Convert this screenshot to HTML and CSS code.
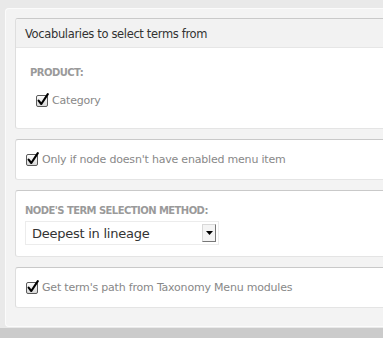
FILE: index.html
```html
<!DOCTYPE html>
<html>
<head>
<meta charset="utf-8">
<link rel="stylesheet" href="styles.css">
</head>
<body>
<div class="page">
  <div class="panel">
    <div class="box">
      <div class="box-head">Vocabularies to select terms from</div>
      <div class="box-body vocab">
        <div class="label">PRODUCT:</div>
        <div class="check indent">
          <svg class="cb" width="14" height="15" viewBox="0 0 14 15"><defs><linearGradient id="g1" x1="0" y1="0" x2="0" y2="1"><stop offset="0" stop-color="#ffffff"/><stop offset="1" stop-color="#d6d6d6"/></linearGradient></defs><rect x="0.5" y="2.5" width="11" height="11" rx="1.5" fill="url(#g1)" stroke="#5a5a5a"/><path d="M2.6 7.6 L5.3 11 L11.8 1.2" fill="none" stroke="#000" stroke-width="2.1" stroke-linecap="round" stroke-linejoin="round"/></svg>
          <span>Category</span>
        </div>
      </div>
    </div>
    <div class="box">
      <div class="box-body single">
        <div class="check">
          <svg class="cb" width="14" height="15" viewBox="0 0 14 15"><defs><linearGradient id="g2" x1="0" y1="0" x2="0" y2="1"><stop offset="0" stop-color="#ffffff"/><stop offset="1" stop-color="#d6d6d6"/></linearGradient></defs><rect x="0.5" y="2.5" width="11" height="11" rx="1.5" fill="url(#g2)" stroke="#5a5a5a"/><path d="M2.6 7.6 L5.3 11 L11.8 1.2" fill="none" stroke="#000" stroke-width="2.1" stroke-linecap="round" stroke-linejoin="round"/></svg>
          <span>Only if node doesn't have enabled menu item</span>
        </div>
      </div>
    </div>
    <div class="box">
      <div class="box-body method">
        <div class="label">NODE'S TERM SELECTION METHOD:</div>
        <div class="select">
          <span class="select-text">Deepest in lineage</span>
          <span class="select-btn"><svg width="7" height="4" viewBox="0 0 7 4"><path d="M0 0 H7 L3.5 4 Z" fill="#000"/></svg></span>
        </div>
      </div>
    </div>
    <div class="box">
      <div class="box-body single">
        <div class="check">
          <svg class="cb" width="14" height="15" viewBox="0 0 14 15"><defs><linearGradient id="g3" x1="0" y1="0" x2="0" y2="1"><stop offset="0" stop-color="#ffffff"/><stop offset="1" stop-color="#d6d6d6"/></linearGradient></defs><rect x="0.5" y="2.5" width="11" height="11" rx="1.5" fill="url(#g3)" stroke="#5a5a5a"/><path d="M2.6 7.6 L5.3 11 L11.8 1.2" fill="none" stroke="#000" stroke-width="2.1" stroke-linecap="round" stroke-linejoin="round"/></svg>
          <span>Get term's path from Taxonomy Menu modules</span>
        </div>
      </div>
    </div>
  </div>
</div>
</body>
</html>
```

FILE: styles.css
```css
html, body {
  margin: 0;
  padding: 0;
  overflow: hidden;
}
body {
  background: #cbcbcb;
  font-family: "DejaVu Sans", "Liberation Sans", sans-serif;
  width: 383px;
  height: 338px;
}
.page {
  background: #e9e9e9;
  padding: 8px 0 1px 5px;
  width: 383px;
  box-sizing: border-box;
}
.panel {
  background: #f3f3f3;
  border: 1px solid #fbfbfb;
  border-right: none;
  border-radius: 4px 0 0 4px;
  padding: 9px 0 18px 9px;
  display: flex;
  flex-direction: column;
  gap: 10px;
}
.box {
  background: #fff;
  border: 1px solid #dedede;
  border-top-color: #c9c9c9;
  border-bottom-color: #e4e4e4;
  border-right: none;
  border-radius: 3px 0 0 3px;
}
.box-head {
  background: #f2f2f2;
  border-bottom: 1px solid #e6e6e6;
  height: 28px;
  line-height: 30px;
  padding-left: 9px;
  font-size: 11.5px;
  letter-spacing: -0.35px;
  color: #333;
  border-radius: 3px 0 0 0;
}
.box-body.vocab {
  height: 80px;
  padding: 0 0 0 14px;
  box-sizing: border-box;
}
.vocab .label {
  padding-top: 19px;
}
.label {
  font-size: 10px;
  font-weight: bold;
  letter-spacing: -0.55px;
  color: #9a9a9a;
  line-height: 12px;
}
.check {
  display: flex;
  align-items: center;
  font-size: 11px;
  letter-spacing: -0.2px;
  color: #888;
}
.check .cb {
  display: block;
  margin-right: 2px;
  flex: none;
}
.indent {
  margin-top: 14px;
  margin-left: 6px;
}
.box-body.single {
  height: 39px;
  padding-left: 10px;
  display: flex;
  align-items: center;
}
.box-body.method {
  height: 65px;
  padding: 14px 0 0 9px;
  box-sizing: border-box;
}
.select {
  margin-top: 4px;
  width: 194px;
  height: 24px;
  box-sizing: border-box;
  border: 1px solid #ececec;
  background: #fff;
  display: flex;
  align-items: center;
  justify-content: space-between;
  padding: 0 2px 0 6px;
}
.select-text {
  font-size: 13px;
  letter-spacing: -0.25px;
  color: #333;
}
.select-btn {
  width: 14px;
  height: 18px;
  box-sizing: border-box;
  background: #f4f4f4;
  border: 1px solid #d8d8d8;
  border-right-color: #777;
  border-bottom-color: #777;
  display: flex;
  align-items: center;
  justify-content: center;
}
.select-btn svg {
  display: block;
}
```
